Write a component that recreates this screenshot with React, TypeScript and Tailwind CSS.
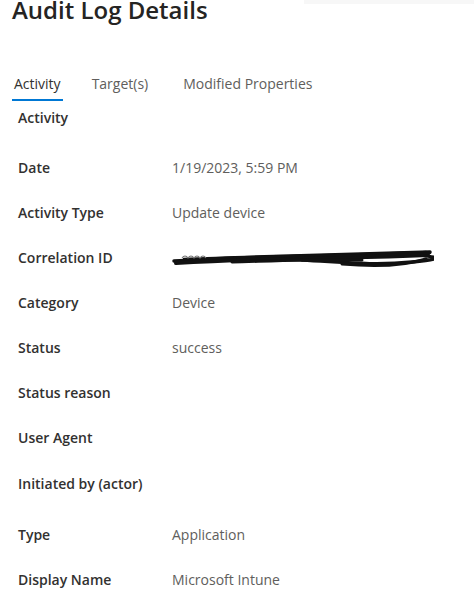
import React from 'react';

const rows = [
  { label: 'Date', value: '1/19/2023, 5:59 PM' },
  { label: 'Activity Type', value: 'Update device' },
  { label: 'Correlation ID', value: '', redacted: true },
  { label: 'Category', value: 'Device' },
  { label: 'Status', value: 'success' },
  { label: 'Status reason', value: '' },
  { label: 'User Agent', value: '' },
];

const actorRows = [
  { label: 'Type', value: 'Application' },
  { label: 'Display Name', value: 'Microsoft Intune' },
];

// hand-drawn marker scribble over the correlation id
const Scribble = () => (
  <svg width="262" height="26" viewBox="0 0 262 26" className="block">
    <g fill="none" stroke="#111" strokeLinecap="round" strokeLinejoin="round">
      <path d="M2 16 C 40 14, 80 12, 120 11 S 200 9, 258 7" strokeWidth="3.5" />
      <path d="M4 18 C 50 15, 90 14, 140 13 S 210 12, 256 10" strokeWidth="4" />
      <path d="M12 14 C 60 12, 110 11, 160 10 S 230 8, 254 7" strokeWidth="2.5" />
      <path d="M130 15 C 170 17, 200 21, 240 17 S 258 12, 250 10" strokeWidth="3.5" />
      <path d="M170 19 C 205 22, 235 20, 254 14" strokeWidth="3" />
      <path d="M60 17 C 100 16, 150 14, 190 15" strokeWidth="3" />
      <path d="M200 11 C 220 9, 240 10, 258 8" strokeWidth="2.5" />
      <path d="M90 12 C 130 10, 170 9, 215 11" strokeWidth="2" />
    </g>
    <g fill="none" stroke="#777" strokeWidth="1.2">
      <path d="M10 13 q3 -4 6 0 q3 -4 6 0 q3 -4 6 0 q3 -4 6 0" />
    </g>
  </svg>
);

const Row = ({ label, value, redacted }: { label: string; value: string; redacted?: boolean }) => (
  <div className="h-[45px] flex items-center">
    <div className="w-[154px] shrink-0 font-semibold text-[#323130]">{label}</div>
    <div className="text-[#605e5c]">{redacted ? <Scribble /> : value}</div>
  </div>
);

export default function App() {
  return (
    <div
      className="w-[474px] h-[594px] overflow-hidden bg-white text-[14px] relative"
      style={{ fontFamily: '"Open Sans", "Noto Sans", sans-serif' }}
    >
      <div className="absolute top-0 right-0 w-[170px] h-[4px] bg-[#f7f7f7]" />

      {/* Header */}
      <div className="h-[73px] pl-[12px]">
        <h1 className="-mt-[2px] text-[24px] leading-[24px] font-semibold text-[#252423]">Audit Log Details</h1>
      </div>

      {/* Tabs */}
      <div className="flex items-start h-[30px] pl-[12px]">
        <div className="h-[30px] px-[2px] pb-[4px] flex items-center border-b-2 border-[#0078d4] text-[#323130]">Activity</div>
        <div className="h-[30px] ml-[29px] pb-[6px] flex items-center text-[#605e5c]">Target(s)</div>
        <div className="h-[30px] ml-[35px] pb-[6px] flex items-center text-[#605e5c]">Modified Properties</div>
      </div>

      <div className="pl-[18px]">
        <div className="h-[32px] flex items-center font-semibold text-[#323130]">Activity</div>

        <div className="mt-[12px]">
          {rows.map((r) => (
            <Row key={r.label} {...r} />
          ))}
        </div>

        <div className="h-[46px] flex items-center font-semibold text-[#323130]">Initiated by (actor)</div>

        <div className="mt-[6px]">
          {actorRows.map((r) => (
            <Row key={r.label} {...r} />
          ))}
        </div>
      </div>
    </div>
  );
}
